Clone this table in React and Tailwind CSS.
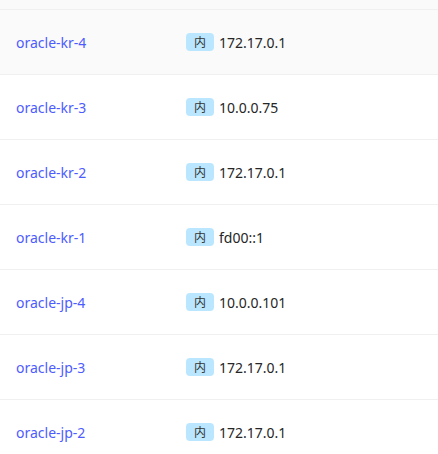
export default function App() {
  const rows = [
    ["oracle-kr-4", "172.17.0.1", true],
    ["oracle-kr-3", "10.0.0.75"],
    ["oracle-kr-2", "172.17.0.1"],
    ["oracle-kr-1", "fd00::1"],
    ["oracle-jp-4", "10.0.0.101"],
    ["oracle-jp-3", "172.17.0.1"],
    ["oracle-jp-2", "172.17.0.1"],
  ];
  return (
    <div className="w-[438px] h-[454px] overflow-hidden bg-white text-[14px]" style={{ fontFamily: '"Noto Sans", "Noto Sans CJK SC", sans-serif' }}>
      <div className="h-[9px] bg-[#fafafa]" />
      {rows.map(([name, ip, hover]) => (
        <div key={name + ip} className={`flex items-center h-[65px] border-t border-[#f0f0f0] ${hover ? "bg-[#fafafa]" : "bg-white"}`}>
          <div className="w-[186px] pl-4 text-[#4d5cff]">{name}</div>
          <div className="flex items-center">
            <span className="w-[28px] h-[18px] rounded-[4px] bg-[#bae7ff] text-[#333] text-[12px] flex items-center justify-center leading-none" style={{ fontFamily: '"Noto Sans CJK SC", sans-serif' }}>内</span>
            <span className="ml-[5px] text-[#262626]">{ip}</span>
          </div>
        </div>
      ))}
    </div>
  );
}
